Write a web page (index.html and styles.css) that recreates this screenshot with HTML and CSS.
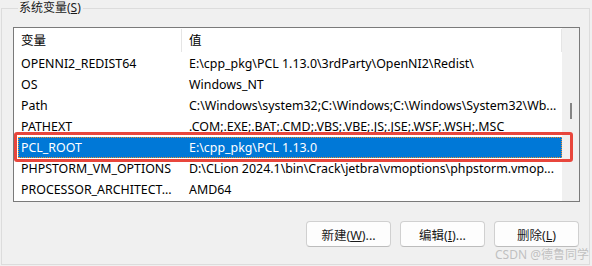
FILE: index.html
```html
<!DOCTYPE html>
<html lang="zh-CN">
<head>
    <meta charset="UTF-8">
    <meta name="viewport" content="width=device-width, initial-scale=1.0">
    <title>系统变量</title>
    <link rel="stylesheet" href="styles.css">
</head>
<body>
    <fieldset class="group">
        <legend>系统变量(<u>S</u>)</legend>

        <div class="listbox">
            <div class="list-main">
                <div class="list-header">
                    <div class="hcell">变量</div>
                    <div class="hcell">值</div>
                </div>
                <div class="row"><div class="cell">OPENNI2_REDIST64</div><div class="cell">E:\cpp_pkg\PCL 1.13.0\3rdParty\OpenNI2\Redist\</div></div>
                <div class="row"><div class="cell">OS</div><div class="cell">Windows_NT</div></div>
                <div class="row"><div class="cell">Path</div><div class="cell">C:\Windows\system32;C:\Windows;C:\Windows\System32\Wb...</div></div>
                <div class="row"><div class="cell">PATHEXT</div><div class="cell">.COM;.EXE;.BAT;.CMD;.VBS;.VBE;.JS;.JSE;.WSF;.WSH;.MSC</div></div>
                <div class="row selected"><div class="cell">PCL_ROOT</div><div class="cell">E:\cpp_pkg\PCL 1.13.0</div></div>
                <div class="row"><div class="cell">PHPSTORM_VM_OPTIONS</div><div class="cell">D:\CLion 2024.1\bin\Crack\jetbra\vmoptions\phpstorm.vmop...</div></div>
                <div class="row"><div class="cell">PROCESSOR_ARCHITECT...</div><div class="cell">AMD64</div></div>
            </div>
            <div class="scrollbar">
                <div class="thumb"></div>
            </div>
            <!-- red annotation around the selected row -->
            <div class="highlight"></div>
        </div>

        <div class="buttons">
            <button>新建(<u>W</u>)...</button>
            <button>编辑(<u>I</u>)...</button>
            <button>删除(<u>L</u>)</button>
        </div>
    </fieldset>

    <div class="watermark">CSDN @德鲁同学</div>
</body>
</html>
```

FILE: styles.css
```css
body {
    margin: 0;
    width: 592px;
    height: 266px;
    overflow: hidden;
    position: relative;
    background-color: #f0f0f0;
    font-family: "Noto Sans", "Noto Sans CJK SC", sans-serif;
    font-size: 12.4px;
    color: #000;
}
.group {
    margin: 0 2px 0 1px;
    height: 265px;
    box-sizing: border-box;
    border: 1px solid #dcdcdc;
    padding: 11px 9px 0 11px;
}
.group legend {
    margin-left: 5px;
    padding: 0 2px 0 1px;
    height: 16px;
    line-height: 16px;
    font-size: 12px;
    color: #1a1a1a;
}
.listbox {
    position: relative;
    display: flex;
    height: 175px;
    box-sizing: border-box;
    border: 1px solid #7a7a7a;
    background-color: #fff;
}
.list-main {
    width: 548px;
}
.list-header {
    display: grid;
    grid-template-columns: 168px 1fr;
    height: 25px;
}
.hcell {
    padding-left: 7px;
    margin: 1px 0;
    line-height: 23px;
    font-size: 12.5px;
    border-right: 1px solid #e5e5e5;
}
.row {
    display: grid;
    grid-template-columns: 164px 1fr;
    height: 21px;
    line-height: 21px;
    margin-left: 4px;
    white-space: nowrap;
    overflow: hidden;
}
.row .cell {
    overflow: hidden;
    padding-left: 3px;
}
.row .cell + .cell {
    padding-left: 7px;
}
.row.selected {
    background-color: #0078d7;
    color: #fff;
    outline: 1px dotted #f08c2c;
    outline-offset: -1px;
}
.scrollbar {
    position: relative;
    width: 17px;
    margin-left: auto;
    background-color: #f0f0f0;
}
.thumb {
    position: absolute;
    left: 8px;
    top: 75px;
    width: 2px;
    height: 16px;
    background-color: #858585;
}
.highlight {
    position: absolute;
    left: 0;
    top: 104px;
    width: 559px;
    height: 30px;
    box-sizing: border-box;
    border: 3px solid #e8463c;
    border-radius: 3px;
}
.buttons {
    display: flex;
    justify-content: flex-end;
    gap: 9px;
    margin: 19px 1px 0 0;
}
button {
    width: 85px;
    height: 26px;
    padding: 0;
    background-color: #fdfdfd;
    border: 1px solid #d0d0d0;
    border-bottom-color: #bcbcbc;
    border-radius: 4px;
    font-family: inherit;
    font-size: 12.5px;
    color: #1a1a1a;
}
.watermark {
    position: absolute;
    right: 3px;
    bottom: 3px;
    font-size: 12px;
    color: rgba(170, 170, 170, 0.7);
}
```
